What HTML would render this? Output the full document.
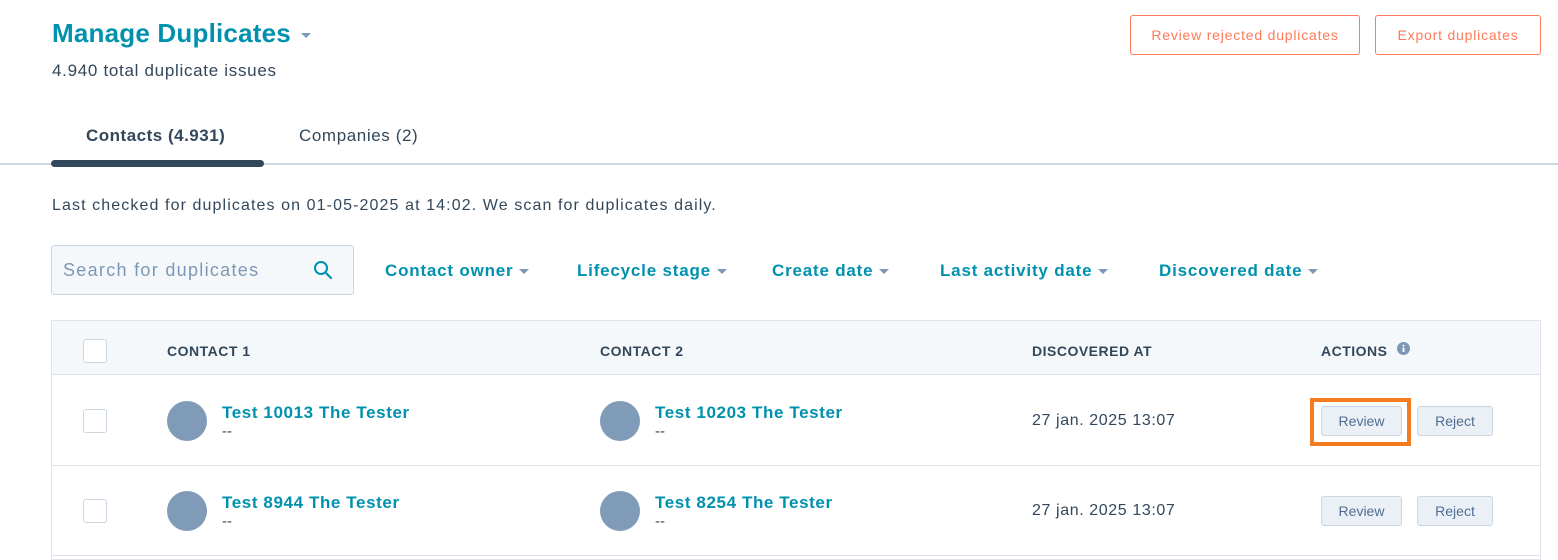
<!DOCTYPE html>
<html><head><style>
*{box-sizing:border-box;margin:0;padding:0}
body{width:1558px;height:560px;overflow:hidden;background:#fff;font-family:"Liberation Sans",sans-serif;color:#33475b;position:relative}
.a{position:absolute}
.h1{left:52px;top:18px;font-size:26px;font-weight:bold;color:#0091ae;letter-spacing:.2px}
.caret{display:inline-block;width:0;height:0;border-left:5px solid transparent;border-right:5px solid transparent;border-top:5px solid #7c98b6;vertical-align:middle;margin-left:6px}
.btn{top:15px;height:40px;border:1px solid #ff7a59;border-radius:3px;color:#ff7a59;font-size:14px;letter-spacing:.8px;display:flex;align-items:center;justify-content:center}
.link{font-size:17px;font-weight:bold;color:#0091ae;top:261px;letter-spacing:.8px}
.th{font-size:14px;font-weight:bold;top:343px;letter-spacing:.5px}
.cb{width:24px;height:24px;border:1px solid #cbd6e2;border-radius:3px;background:#fff}
.av{width:40px;height:40px;border-radius:50%;background:#7f9bb8}
.name{font-size:17px;font-weight:bold;color:#0091ae;letter-spacing:.6px}
.sb{height:30px;border:1px solid #cbd6e2;border-radius:3px;background:#eaf0f6;font-size:14px;color:#506e91;display:flex;align-items:center;justify-content:center}
</style></head><body>
<div class="a h1">Manage Duplicates<span class="caret" style="margin-left:10px"></span></div>
<div class="a" style="left:52px;top:61px;font-size:17px;letter-spacing:.7px">4.940 total duplicate issues</div>
<div class="a btn" style="left:1130px;width:230px">Review rejected duplicates</div>
<div class="a btn" style="left:1375px;width:166px">Export duplicates</div>
<div class="a" style="left:86px;top:126px;font-size:17px;font-weight:bold;letter-spacing:.5px">Contacts (4.931)</div>
<div class="a" style="left:299px;top:126px;font-size:17px;letter-spacing:.6px">Companies (2)</div>
<div class="a" style="left:0;top:163px;width:1558px;height:2px;background:#cbd6e2"></div>
<div class="a" style="left:51px;top:160px;width:213px;height:7px;border-radius:4px;background:#33475b"></div>
<div class="a" style="left:52px;top:197px;font-size:16px;letter-spacing:1.1px">Last checked for duplicates on 01-05-2025 at 14:02. We scan for duplicates daily.</div>
<div class="a" style="left:51px;top:245px;width:303px;height:50px;border:1px solid #cbd6e2;border-radius:3px;background:#f5f8fa"></div>
<div class="a" style="left:63px;top:260px;font-size:18px;color:#7c98b6;letter-spacing:1.3px">Search for duplicates</div>
<svg class="a" style="left:313px;top:260px" width="20" height="20" viewBox="0 0 20 20"><circle cx="8" cy="8" r="6" fill="none" stroke="#0091ae" stroke-width="2"/><path d="M12.5 12.5L18 18" stroke="#0091ae" stroke-width="2.2" stroke-linecap="round"/></svg>
<div class="a link" style="left:385px">Contact owner<span class="caret"></span></div>
<div class="a link" style="left:577px">Lifecycle stage<span class="caret"></span></div>
<div class="a link" style="left:772px">Create date<span class="caret"></span></div>
<div class="a link" style="left:940px">Last activity date<span class="caret"></span></div>
<div class="a link" style="left:1159px">Discovered date<span class="caret"></span></div>
<div class="a" style="left:51px;top:320px;width:1490px;height:240px;border:1px solid #dfe3eb"></div>
<div class="a" style="left:52px;top:321px;width:1488px;height:54px;background:#f5f8fa;border-bottom:1px solid #dfe3eb"></div>
<div class="a cb" style="left:83px;top:339px"></div>
<div class="a th" style="left:167px">CONTACT 1</div>
<div class="a th" style="left:600px">CONTACT 2</div>
<div class="a th" style="left:1032px">DISCOVERED AT</div>
<div class="a th" style="left:1321px">ACTIONS</div>
<svg class="a" style="left:1397px;top:342px" width="13" height="13" viewBox="0 0 13 13"><circle cx="6.5" cy="6.5" r="6.5" fill="#7c98b6"/><rect x="5.6" y="5.5" width="1.8" height="4.5" fill="#fff"/><circle cx="6.5" cy="3.6" r="1" fill="#fff"/></svg>
<div class="a" style="left:52px;top:465px;width:1488px;height:1px;background:#dfe3eb"></div>
<div class="a" style="left:52px;top:555px;width:1488px;height:1px;background:#dfe3eb"></div>

<div class="a cb" style="left:83px;top:409px"></div>
<div class="a av" style="left:167px;top:401px"></div>
<div class="a name" style="left:222px;top:403px">Test 10013 The Tester</div>
<div class="a" style="left:222px;top:423px;font-size:15px">--</div>
<div class="a av" style="left:600px;top:401px"></div>
<div class="a name" style="left:655px;top:403px">Test 10203 The Tester</div>
<div class="a" style="left:655px;top:423px;font-size:15px">--</div>
<div class="a" style="left:1032px;top:412px;font-size:16px;letter-spacing:.6px">27 jan. 2025 13:07</div>
<div class="a" style="left:1310px;top:398px;width:101px;height:48px;border:4px solid #f47b20"></div>
<div class="a sb" style="left:1321px;top:406px;width:81px">Review</div>
<div class="a sb" style="left:1417px;top:406px;width:76px">Reject</div>

<div class="a cb" style="left:83px;top:499px"></div>
<div class="a av" style="left:167px;top:491px"></div>
<div class="a name" style="left:222px;top:493px">Test 8944 The Tester</div>
<div class="a" style="left:222px;top:513px;font-size:15px">--</div>
<div class="a av" style="left:600px;top:491px"></div>
<div class="a name" style="left:655px;top:493px">Test 8254 The Tester</div>
<div class="a" style="left:655px;top:513px;font-size:15px">--</div>
<div class="a" style="left:1032px;top:502px;font-size:16px;letter-spacing:.6px">27 jan. 2025 13:07</div>
<div class="a sb" style="left:1321px;top:496px;width:81px">Review</div>
<div class="a sb" style="left:1417px;top:496px;width:76px">Reject</div>
</body></html>
